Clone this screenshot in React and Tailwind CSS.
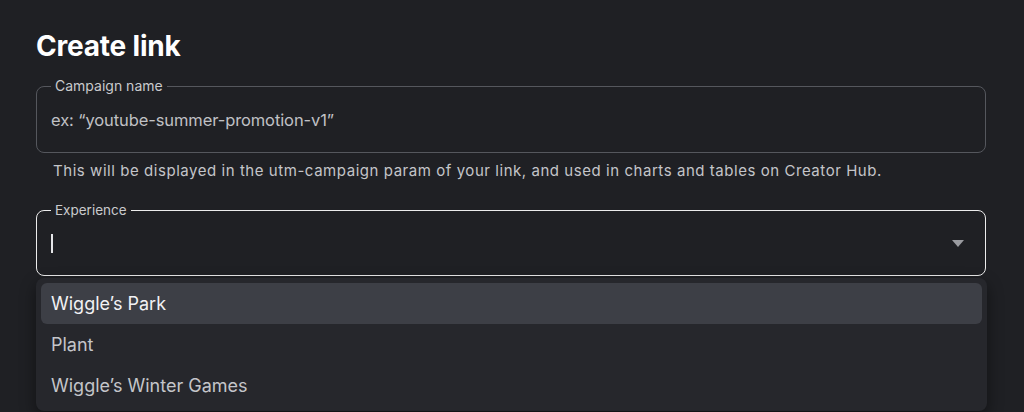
import { useState } from "react";

const options = ["Wiggle’s Park", "Plant", "Wiggle’s Winter Games"];

function Caret() {
  return (
    <svg width="12" height="7" viewBox="0 0 12 7" className="shrink-0">
      <path d="M0 0h12L6 7z" fill="#9a9ba0" />
    </svg>
  );
}

export default function App() {
  const [active] = useState(0);

  return (
    <div
      className="h-[412px] w-[1024px] overflow-hidden bg-[#1f2024] text-[#e4e5e8]"
      style={{ fontFamily: "Inter, 'Noto Sans', sans-serif" }}
    >
      <div className="flex flex-col pl-9 pr-[38px] pt-[27px]">
        <h1 className="text-[28px] font-bold leading-[38px] tracking-[-0.2px] text-white">Create link</h1>

        {/* campaign name */}
        <fieldset className="mt-[13px] h-[75px] rounded-lg border border-[#55575d] pl-[14px] pr-4">
          <legend className="px-[4px] text-[14px] leading-[16px] text-[#c9cacd]">Campaign name</legend>
          <div className="pt-[14px] text-[16.5px] leading-[24px] tracking-[-0.1px] text-[#c0c1c5]">ex: “youtube-summer-promotion-v1”</div>
        </fieldset>
        <p className="mt-[8px] pl-[17px] text-[15px] leading-[20px] tracking-[0.55px] text-[#c4c5c9]">
          This will be displayed in the utm-campaign param of your link, and used in charts and tables on Creator Hub.
        </p>

        {/* experience */}
        <div className="relative mt-[21px]">
          <fieldset className="h-[74px] rounded-lg border-[1.5px] border-[#ececec] pl-[14px] pr-[21px]">
            <legend className="px-[4px] text-[13.5px] leading-[16px] text-[#c9cacd]">Experience</legend>
            <div className="flex h-[50px] items-center justify-between">
              <span className="h-[19px] w-[2px] bg-[#e4e5e8]" />
              <Caret />
            </div>
          </fieldset>

          <ul className="absolute left-0 right-[-1px] top-[76px] flex flex-col rounded-lg bg-[#26272c] p-[5px] shadow-[0_6px_16px_rgba(0,0,0,0.45)]">
            {options.map((o, i) => (
              <li
                key={o}
                className={
                  "flex h-[41px] items-center rounded-md px-[10px] text-[18px] " +
                  (i === active ? "bg-[#3d3f46] text-[#f2f2f4]" : "text-[#c4c5c9]")
                }
              >
                {o}
              </li>
            ))}
          </ul>
        </div>
      </div>
    </div>
  );
}
